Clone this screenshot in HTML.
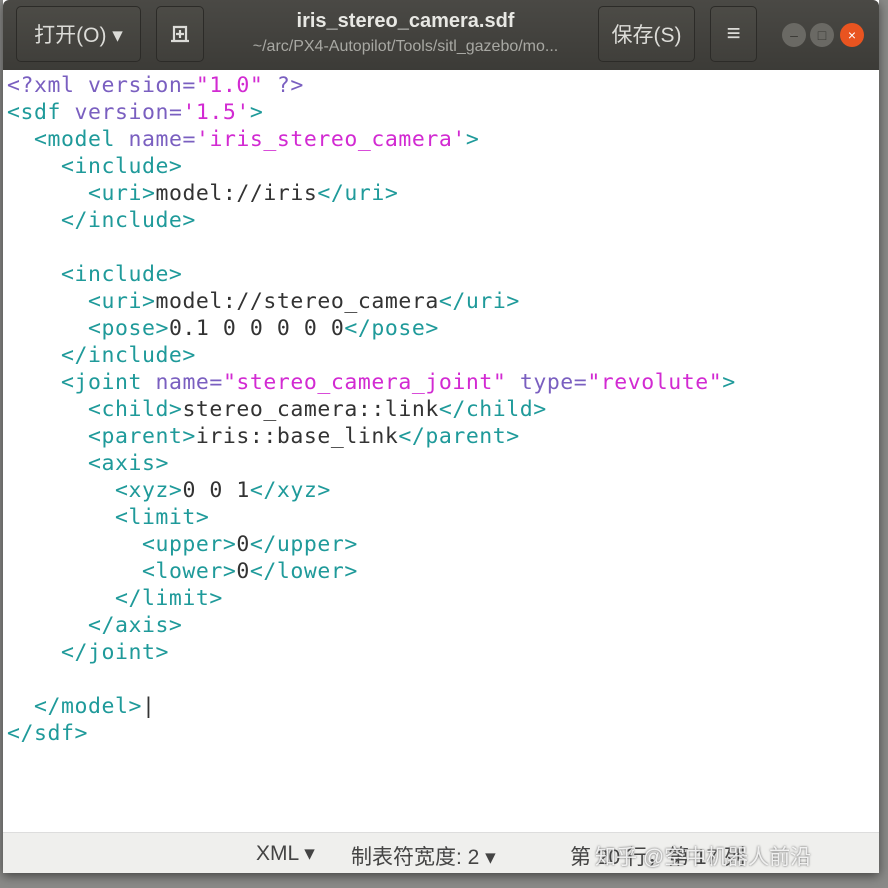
<!DOCTYPE html>
<html><head><meta charset="utf-8"><style>
body{margin:0;width:888px;height:888px;background:#8a8a88;position:relative;overflow:hidden;font-family:"Liberation Sans","Noto Sans CJK SC",sans-serif}
.win{position:absolute;left:3px;top:0;width:876px;height:872px;background:#fff;box-shadow:0 4px 10px rgba(0,0,0,.5)}
.hdr{position:absolute;left:0;top:0;width:876px;height:70px;background:linear-gradient(#4a4945,#3c3b37);border-radius:6px 6px 0 0}
.btn{position:absolute;top:6px;height:56px;border:1px solid #2c2b28;border-radius:5px;background:linear-gradient(#4c4b46,#403f3b);color:#dcdcd8;font-size:21px;display:flex;align-items:center;justify-content:center;box-sizing:border-box}
.title{position:absolute;left:210px;width:385px;text-align:center;color:#e8e8e4}
.code{position:absolute;left:4px;top:72px;font-family:"DejaVu Sans Mono","Liberation Mono",monospace;font-size:21.5px;line-height:27px;white-space:pre;color:#333;letter-spacing:0.55px}
.t{color:#1f9a9a}.a{color:#7a5fc0}.s{color:#d22ad2}
.status{position:absolute;left:0;top:832px;width:876px;height:40px;background:#efefed;border-top:1px solid #ddd;color:#444;font-size:21px}
.status span{position:absolute;top:8px}
.wb{position:absolute;top:23px;width:24px;height:24px;border-radius:50%;background:#6a6964;color:#3a3935;font-size:14px;text-align:center;line-height:24px}
</style></head><body>
<div class="win">
<div class="hdr">
<div class="btn" style="left:13px;width:125px">打开(O) ▾</div>
<div class="btn" style="left:153px;width:48px"><svg width="22" height="22" viewBox="0 0 22 22" fill="none" stroke="#dcdcd8" stroke-width="2.2"><path d="M5 4h12v14H5zM2 18h18M11 7v8M7 11h8"/></svg></div>
<div class="title" style="top:10px;font-size:20px;font-weight:bold">iris_stereo_camera.sdf</div>
<div class="title" style="top:38px;font-size:16px;color:#a8a8a3">~/arc/PX4-Autopilot/Tools/sitl_gazebo/mo...</div>
<div class="btn" style="left:595px;width:97px">保存(S)</div>
<div class="btn" style="left:707px;width:47px;font-size:24px;font-weight:bold">≡</div>
<div class="wb" style="left:779px">–</div>
<div class="wb" style="left:807px">□</div>
<div class="wb" style="left:837px;background:#e95420;color:#fff">×</div>
</div>
<div class="code"><span class="a">&lt;?xml version=</span><span class="s">"1.0"</span><span class="a"> ?&gt;</span>
<span class="t">&lt;sdf</span> <span class="a">version=</span><span class="s">'1.5'</span><span class="t">&gt;</span>
  <span class="t">&lt;model</span> <span class="a">name=</span><span class="s">'iris_stereo_camera'</span><span class="t">&gt;</span>
    <span class="t">&lt;include&gt;</span>
      <span class="t">&lt;uri&gt;</span>model://iris<span class="t">&lt;/uri&gt;</span>
    <span class="t">&lt;/include&gt;</span>

    <span class="t">&lt;include&gt;</span>
      <span class="t">&lt;uri&gt;</span>model://stereo_camera<span class="t">&lt;/uri&gt;</span>
      <span class="t">&lt;pose&gt;</span>0.1 0 0 0 0 0<span class="t">&lt;/pose&gt;</span>
    <span class="t">&lt;/include&gt;</span>
    <span class="t">&lt;joint</span> <span class="a">name=</span><span class="s">"stereo_camera_joint"</span> <span class="a">type=</span><span class="s">"revolute"</span><span class="t">&gt;</span>
      <span class="t">&lt;child&gt;</span>stereo_camera::link<span class="t">&lt;/child&gt;</span>
      <span class="t">&lt;parent&gt;</span>iris::base_link<span class="t">&lt;/parent&gt;</span>
      <span class="t">&lt;axis&gt;</span>
        <span class="t">&lt;xyz&gt;</span>0 0 1<span class="t">&lt;/xyz&gt;</span>
        <span class="t">&lt;limit&gt;</span>
          <span class="t">&lt;upper&gt;</span>0<span class="t">&lt;/upper&gt;</span>
          <span class="t">&lt;lower&gt;</span>0<span class="t">&lt;/lower&gt;</span>
        <span class="t">&lt;/limit&gt;</span>
      <span class="t">&lt;/axis&gt;</span>
    <span class="t">&lt;/joint&gt;</span>

  <span class="t">&lt;/model&gt;</span>|
<span class="t">&lt;/sdf&gt;</span></div>
<div class="status">
<span style="left:253px">XML ▾</span>
<span style="left:348px">制表符宽度: 2 ▾</span>
<span style="left:567px">第 20 行，第 17 列</span>
<span style="left:592px;color:rgba(255,255,255,.85);text-shadow:0 0 2px #555">知乎 @空中机器人前沿</span>
</div>
</div>
</body></html>
